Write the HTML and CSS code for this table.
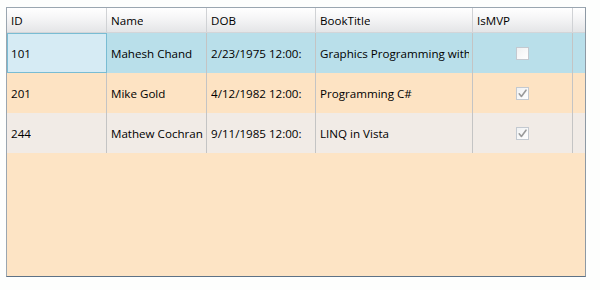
FILE: index.html
```html
<!DOCTYPE html>
<html>
<head>
<meta charset="utf-8">
<link rel="stylesheet" href="styles.css">
</head>
<body>
<div class="grid">
  <div class="row header">
    <div class="cell"><span class="txt">ID</span></div>
    <div class="cell"><span class="txt">Name</span></div>
    <div class="cell"><span class="txt">DOB</span></div>
    <div class="cell"><span class="txt">BookTitle</span></div>
    <div class="cell"><span class="txt">IsMVP</span></div>
    <div class="cell filler"></div>
  </div>
  <div class="row r1">
    <div class="cell selected"><span class="txt">101</span></div>
    <div class="cell"><span class="txt">Mahesh Chand</span></div>
    <div class="cell"><span class="txt">2/23/1975 12:00:</span></div>
    <div class="cell"><span class="txt">Graphics Programming with</span></div>
    <div class="cell center"><span class="check"></span></div>
    <div class="cell filler"></div>
  </div>
  <div class="row r2">
    <div class="cell"><span class="txt">201</span></div>
    <div class="cell"><span class="txt">Mike Gold</span></div>
    <div class="cell"><span class="txt">4/12/1982 12:00:</span></div>
    <div class="cell"><span class="txt">Programming C#</span></div>
    <div class="cell center"><span class="check"><svg viewBox="0 0 13 13" width="13" height="13"><path d="M3.2 6.8 L5.4 9.4 L10 3.2" fill="none" stroke="#9a9a9a" stroke-width="1.6" stroke-linejoin="round" stroke-linecap="round"/></svg></span></div>
    <div class="cell filler"></div>
  </div>
  <div class="row r3">
    <div class="cell"><span class="txt">244</span></div>
    <div class="cell"><span class="txt">Mathew Cochran</span></div>
    <div class="cell"><span class="txt">9/11/1985 12:00:</span></div>
    <div class="cell"><span class="txt">LINQ in Vista</span></div>
    <div class="cell center"><span class="check"><svg viewBox="0 0 13 13" width="13" height="13"><path d="M3.2 6.8 L5.4 9.4 L10 3.2" fill="none" stroke="#9a9a9a" stroke-width="1.6" stroke-linejoin="round" stroke-linecap="round"/></svg></span></div>
    <div class="cell filler"></div>
  </div>
</div>
</body>
</html>
```
FILE: styles.css
```css
html, body {
  margin: 0;
  padding: 0;
  background: #fdfefd;
}
body {
  padding: 7px 0 0 6px;
  font-family: "Open Sans", "Noto Sans", sans-serif;
  font-size: 11.6px;
  color: #000;
}
.grid {
  width: 578px;
  height: 268px;
  border: 1px solid #9aa6b0;
  border-bottom-color: #5e7286;
  border-right-color: #8d99a4;
  background: #fde4c5;
  display: flex;
  flex-direction: column;
}
.row {
  display: grid;
  grid-template-columns: 100px 100px 109px 157px 100px 12px;
  height: 40px;
}
.cell {
  border-right: 1px solid #c4c4c4;
  padding: 0 3px 0 4px;
  display: flex;
  align-items: center;
  min-width: 0;
  overflow: hidden;
  box-sizing: border-box;
}
.txt {
  display: block;
  white-space: nowrap;
  overflow: hidden;
  min-width: 0;
  max-width: 100%;
}
.filler {
  border-right: none;
}
.header {
  height: 24px;
  background: linear-gradient(#ffffff 0%, #f6f6f7 40%, #e4e5e7 100%);
  border-bottom: 1px solid #d3d5d8;
}
.header .cell {
  border-right-color: #d0d2d5;
  padding-top: 1px;
}
.r1 { background: #b9dfea; }
.r2 { background: #fde3c3; }
.r3 { background: #f1ebe6; }
.selected {
  background: #d6ebf4;
  border: 1px solid #79bcd3;
  padding-left: 3px;
}
.center {
  justify-content: center;
  padding: 0;
}
.check {
  width: 13px;
  height: 13px;
  box-sizing: border-box;
  border: 1px solid #c3c9d0;
  background: linear-gradient(135deg, #f0f1f2, #ffffff);
  display: block;
}
.check svg {
  display: block;
  margin: -1px 0 0 -1px;
}
```
